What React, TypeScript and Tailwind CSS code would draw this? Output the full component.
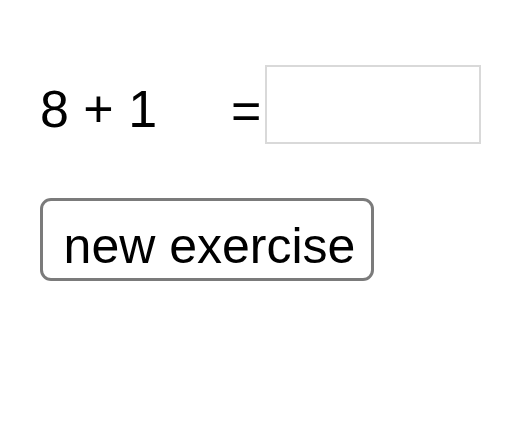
import React from "react";

export default function App() {
  return (
    <div className="min-h-[423px] bg-white pl-[40px] pt-[65px] font-['Liberation_Sans',Arial,sans-serif] text-black">
      <div className="flex h-[79px] items-start">
        <span className="mt-[18px] w-[191px] whitespace-pre text-[52px] leading-none">8 + 1</span>
        <span className="mt-[20px] text-[52px] leading-none">=</span>
        <input
          type="text"
          aria-label="answer"
          className="ml-[4px] h-[79px] w-[216px] border-2 border-[#d9d9d9] bg-white outline-none"
        />
      </div>
      <button className="mt-[54px] flex h-[83px] w-[334px] items-center justify-center rounded-[11px] border-[3px] border-[#7b7b7b] bg-white pl-[5px] pt-[12px] text-[50px] leading-none">
        new exercise
      </button>
    </div>
  );
}
